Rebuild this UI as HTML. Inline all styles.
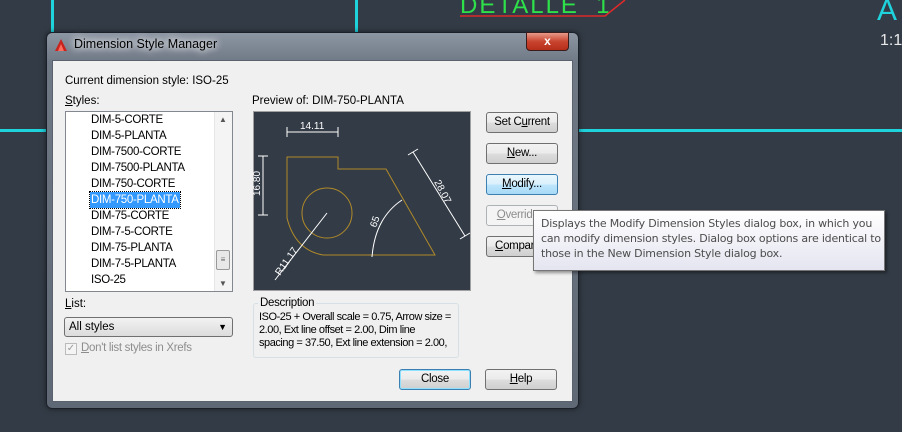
<!DOCTYPE html>
<html><head><style>
*{margin:0;padding:0;box-sizing:border-box}
body{width:902px;height:432px;background:#333b46;position:relative;overflow:hidden;font-family:"Liberation Sans",sans-serif;font-size:11.5px;color:#000}
.a{position:absolute}
.btn{position:absolute;left:486px;width:72px;height:21px;border:1px solid #707070;border-radius:3px;background:linear-gradient(#f2f2f2,#ebebeb 50%,#dddddd 51%,#cfcfcf);text-align:center;line-height:19px;font-size:11.5px;letter-spacing:-0.3px;white-space:nowrap;overflow:hidden}
.li{position:absolute;left:24px;height:16px;line-height:16px;padding:0 1px;letter-spacing:-0.3px}
</style></head><body>
<div class="a" style="left:51px;top:0;width:3px;height:32px;background:#1fd3dc"></div>
<div class="a" style="left:355px;top:0;width:3px;height:32px;background:#1fd3dc"></div>
<div class="a" style="left:0;top:129px;width:46px;height:3px;background:#1fd3dc"></div>
<div class="a" style="left:578px;top:129px;width:324px;height:3px;background:#1fd3dc"></div>
<div class="a" style="left:460px;top:-8px;color:#2ee04a;font-size:24px;letter-spacing:2px">DETALLE&nbsp;&nbsp;1</div>
<svg class="a" style="left:455px;top:0" width="180" height="20"><polyline points="5,16 150,16 170,0" fill="none" stroke="#e02a2a" stroke-width="1.5"/></svg>
<div class="a" style="left:877px;top:-6px;color:#1fd3dc;font-size:30px">A</div>
<div class="a" style="left:880px;top:32px;color:#e8e8e8;font-size:16px">1:1</div>

<div class="a" style="left:46px;top:32px;width:533px;height:377px;border:1px solid #1c2028;border-radius:6px;background:linear-gradient(#8d96a3,#6f7885 30px,#5f6875);box-shadow:0 0 6px rgba(0,0,0,.5)"></div>
<div class="a" style="left:54px;top:38px;width:14px;height:14px"><svg width="14" height="14"><polygon points="7,1 13,13 1,13" fill="#c8231d"/><polygon points="7,6 10,13 4,13" fill="#ff6d5e"/></svg></div>
<div class="a" style="left:74px;top:37px;font-size:12.5px;color:#000;text-shadow:0 0 8px #fff,0 0 8px #fff">Dimension Style Manager</div>
<div class="a" style="left:526px;top:32px;width:43px;height:19px;border:1px solid #3a1c1c;border-radius:0 0 4px 4px;background:linear-gradient(#e89a8a,#c8442e 50%,#b62e1a);color:#fff;font-weight:bold;text-align:center;font-size:12px;line-height:17px">x</div>
<div class="a" style="left:52px;top:60px;width:521px;height:342px;background:#f0f0f0;border:1px solid #5a6270"></div>

<div class="a" style="left:65px;top:75px">Current dimension style: ISO-25</div>
<div class="a" style="left:65px;top:95px"><u>S</u>tyles:</div>
<div class="a" style="left:252px;top:95px">Preview of: DIM-750-PLANTA</div>

<div class="a" style="left:65px;top:111px;width:168px;height:181px;background:#fff;border:1px solid #828790">
<div class="li" style="top:0">DIM-5-CORTE</div>
<div class="li" style="top:16px">DIM-5-PLANTA</div>
<div class="li" style="top:32px">DIM-7500-CORTE</div>
<div class="li" style="top:48px">DIM-7500-PLANTA</div>
<div class="li" style="top:64px">DIM-750-CORTE</div>
<div class="li" style="top:80px;background:#3399ff;color:#fff;outline:1px dotted #000">DIM-750-PLANTA</div>
<div class="li" style="top:96px">DIM-75-CORTE</div>
<div class="li" style="top:112px">DIM-7-5-CORTE</div>
<div class="li" style="top:128px">DIM-75-PLANTA</div>
<div class="li" style="top:144px">DIM-7-5-PLANTA</div>
<div class="li" style="top:160px">ISO-25</div>
<div class="a" style="left:148px;top:0;width:18px;height:179px;background:#f4f4f4;border-left:1px solid #e6e6e6"></div>
<div class="a" style="left:153px;top:3px;font-size:8px;color:#555">▲</div>
<div class="a" style="left:153px;top:167px;font-size:8px;color:#555">▼</div>
<div class="a" style="left:150px;top:138px;width:14px;height:20px;border:1px solid #999;border-radius:2px;background:#e8e8e8;font-size:8px;text-align:center;line-height:17px;color:#666">≡</div>
</div>

<div class="a" style="left:253px;top:111px;width:218px;height:180px;background:#333b46;border:1px solid #a0a0a0"></div>
<svg class="a" style="left:250px;top:100px" width="230" height="200">
<g fill="none" stroke="#b08a2a" stroke-width="1">
<path d="M37,57 L88,57 L88,69 L136,69 L185,155 L73,155 Q45,150 37,118 Z"/>
<circle cx="77" cy="113" r="25"/>
</g>
<g fill="none" stroke="#fff" stroke-width="1">
<path d="M37,32 L88,32 M37,27 L37,37 M88,27 L88,37"/>
<path d="M13,56 L13,115 M8,56 L18,56 M8,115 L18,115"/>
<path d="M163,52 L215,136 M158,55 L168,49 M210,139 L220,133"/>
<path d="M77,113 L25,180"/>
<path d="M152,100 Q125,118 122,157"/>
</g>
<g fill="#fff" font-size="10" font-family="Liberation Sans">
<text x="50" y="29">14.11</text>
<text transform="translate(10,96) rotate(-90)">16.80</text>
<text transform="translate(184,82) rotate(62)">28.07</text>
<text transform="translate(30,176) rotate(-55)">R11.17</text>
<text transform="translate(126,128) rotate(-70)">65</text>
</g>
</svg>

<div class="a" style="left:253px;top:303px;width:206px;height:55px;border:1px solid #d5dfe5;border-radius:3px"></div>
<div class="a" style="left:258px;top:297px;background:#f0f0f0;padding:0 2px;letter-spacing:-0.3px">Description</div>
<div class="a" style="left:259px;top:311px;line-height:13px;white-space:nowrap;font-size:11px;letter-spacing:-0.45px">ISO-25 + Overall scale = 0.75, Arrow size =<br>2.00, Ext line offset = 2.00, Dim line<br>spacing = 37.50, Ext line extension = 2.00,</div>

<div class="a" style="left:65px;top:298px"><u>L</u>ist:</div>
<div class="a" style="left:64px;top:317px;width:169px;height:20px;border:1px solid #707070;border-radius:3px;background:linear-gradient(#f2f2f2,#dcdcdc);padding-left:4px;line-height:18px">All styles<span style="position:absolute;right:5px;font-size:9px">▼</span></div>
<div class="a" style="left:65px;top:343px;width:12px;height:12px;border:1px solid #bbb;background:#f4f4f4;color:#999;font-size:10px;line-height:10px;text-align:center">✓</div>
<div class="a" style="left:81px;top:342px;color:#8d8d8d;letter-spacing:-0.3px"><u>D</u>on't list styles in Xrefs</div>

<div class="btn" style="top:112px">Set C<u>u</u>rrent</div>
<div class="btn" style="top:143px"><u>N</u>ew...</div>
<div class="btn" style="top:174px;border-color:#3c7fb1;background:linear-gradient(#eaf6fd,#d9f0fc 50%,#bee6fd 51%,#a7d9f5)"><u>M</u>odify...</div>
<div class="btn" style="top:205px;color:#8d8d8d;border-color:#adb2b5;background:#f4f4f4"><u>O</u>verride...</div>
<div class="btn" style="top:236px"><u>C</u>ompare...</div>
<div class="btn" style="left:399px;top:369px;border-color:#3c7fb1;box-shadow:inset 0 0 0 1px #8ee1ff">Close</div>
<div class="btn" style="left:485px;top:369px"><u>H</u>elp</div>

<div class="a" style="left:533px;top:210px;width:352px;height:61px;border:1px solid #767676;background:linear-gradient(#ffffff,#e4e5f0);box-shadow:2px 2px 3px rgba(0,0,0,.4);padding:5px 0 0 7px;font-family:'DejaVu Sans',sans-serif;font-size:11px;line-height:15px;color:#4c4c4c;letter-spacing:-0.2px">Displays the Modify Dimension Styles dialog box, in which you can modify dimension styles. Dialog box options are identical to those in the New Dimension Style dialog box.</div>
</body></html>
